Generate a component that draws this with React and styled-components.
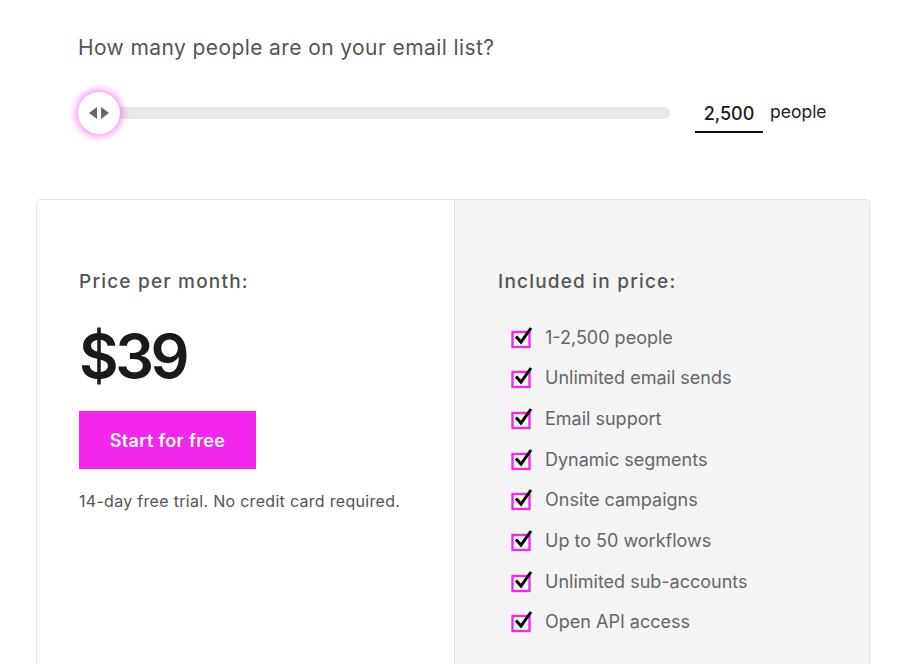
import React, { useState } from "react";
import styled, { createGlobalStyle } from "styled-components";

const Global = createGlobalStyle`
  body {
    margin: 0;
    background: #fff;
    font-family: Inter, "Liberation Sans", sans-serif;
    overflow: hidden;
  }
`;

const Page = styled.div`
  width: 834px;
  margin-left: 36px;
  padding-top: 35px;
`;

const Question = styled.h2`
  margin: 0 0 0 42px;
  font-size: 21px;
  font-weight: 400;
  color: #555;
  letter-spacing: 0.4px;
`;

const SliderRow = styled.div`
  display: flex;
  align-items: center;
  margin-top: 31px;
  padding-left: 42px;
  height: 44px;
`;

const Track = styled.div`
  position: relative;
  width: 592px;
  height: 12px;
  border-radius: 6px;
  background: #e8e8e8;
`;

const Thumb = styled.div`
  position: absolute;
  top: 50%;
  transform: translateY(-50%);
  width: 42px;
  height: 42px;
  border-radius: 50%;
  background: #fff;
  box-shadow: 0 0 6px 3px rgba(242, 38, 236, 0.45);
  display: flex;
  align-items: center;
  justify-content: center;
  gap: 4px;
`;

const CountField = styled.div`
  display: flex;
  align-items: center;
  margin-left: 25px;
  gap: 7px;
`;

const CountValue = styled.div`
  width: 68px;
  text-align: center;
  font-size: 18px;
  font-weight: 500;
  color: #1a1a1a;
  padding: 6px 0 7px;
  border-bottom: 2px solid #111;
  margin-top: 3px;
`;

const Unit = styled.span`
  font-size: 17.5px;
  color: #222;
  margin-top: -4px;
`;

const Card = styled.div`
  display: grid;
  grid-template-columns: 417px 1fr;
  margin-top: 64px;
  border: 1px solid #e2e2e2;
  border-bottom: none;
  border-radius: 5px 5px 0 0;
  overflow: hidden;
  height: 480px;
`;

const Pane = styled.div`
  background: ${(p) => (p.$shade ? "#f4f4f4" : "#fff")};
  border-left: ${(p) => (p.$shade ? "1px solid #e2e2e2" : "none")};
  padding: 70px 0 0 ${(p) => (p.$shade ? "43px" : "42px")};
`;

const Label = styled.div`
  font-size: 19px;
  font-weight: 500;
  color: #555;
  letter-spacing: 1.2px;
`;

const Price = styled.div`
  margin-top: 23px;
  font-size: 61px;
  font-weight: 600;
  color: #1a1a1a;
  letter-spacing: -3.5px;
  line-height: 80px;
`;

const Button = styled.button`
  margin-top: 15px;
  width: 177px;
  height: 58px;
  border: none;
  border-radius: 0;
  background: #f226ec;
  color: #fff;
  font-family: inherit;
  font-size: 18px;
  font-weight: 600;
  letter-spacing: 0.3px;
  cursor: pointer;
`;

const Note = styled.p`
  margin: 22px 0 0;
  font-size: 16px;
  color: #555;
  letter-spacing: 0.3px;
`;

const List = styled.ul`
  list-style: none;
  margin: 33px 0 0 13px;
  padding: 0;
  display: flex;
  flex-direction: column;
  gap: 18.7px;
`;

const Item = styled.li`
  display: flex;
  align-items: center;
  gap: 11px;
  font-size: 18px;
  color: #666;
  height: 22px;
`;

const Check = () => (
  <svg width="23" height="23" viewBox="0 0 23 23">
    <rect x="1.5" y="6" width="17" height="15" fill="none" stroke="#f226ec" strokeWidth="2.3" />
    <path d="M5 10.5 L10 16 L20 2" fill="none" stroke="#000" strokeWidth="3" strokeLinejoin="miter" />
  </svg>
);

const Arrows = () => (
  <>
    <svg width="8" height="12" viewBox="0 0 8 12"><path d="M8 0 L0 6 L8 12 Z" fill="#666" /></svg>
    <svg width="8" height="12" viewBox="0 0 8 12"><path d="M0 0 L8 6 L0 12 Z" fill="#666" /></svg>
  </>
);

const features = [
  "1-2,500 people",
  "Unlimited email sends",
  "Email support",
  "Dynamic segments",
  "Onsite campaigns",
  "Up to 50 workflows",
  "Unlimited sub-accounts",
  "Open API access",
];

export default function App() {
  const [count] = useState("2,500");
  const [pos] = useState(0);
  return (
    <Page>
      <Global />
      <Question>How many people are on your email list?</Question>
      <SliderRow>
        <Track>
          <Thumb style={{ left: pos }}>
            <Arrows />
          </Thumb>
        </Track>
        <CountField>
          <CountValue>{count}</CountValue>
          <Unit>people</Unit>
        </CountField>
      </SliderRow>
      <Card>
        <Pane>
          <Label>Price per month:</Label>
          <Price>$39</Price>
          <Button>Start for free</Button>
          <Note>14-day free trial. No credit card required.</Note>
        </Pane>
        <Pane $shade>
          <Label>Included in price:</Label>
          <List>
            {features.map((f) => (
              <Item key={f}>
                <Check />
                {f}
              </Item>
            ))}
          </List>
        </Pane>
      </Card>
    </Page>
  );
}
